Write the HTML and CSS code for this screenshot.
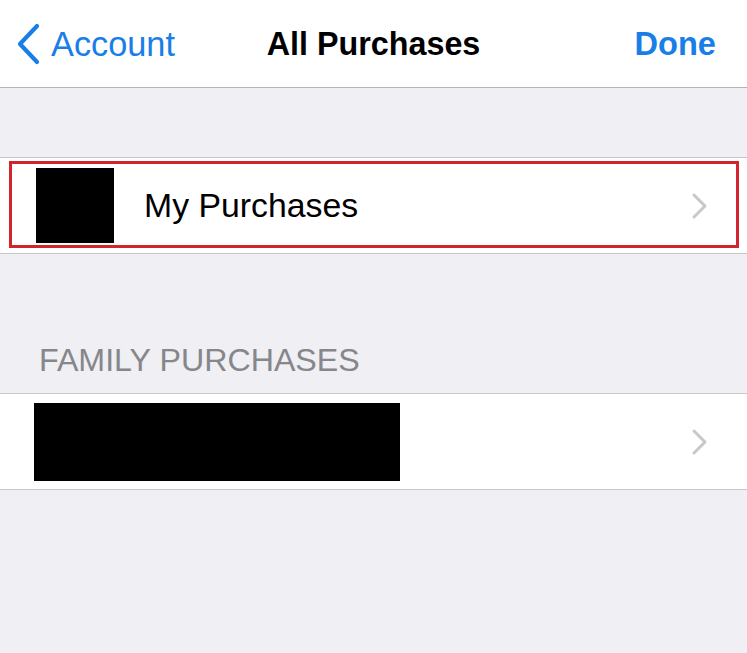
FILE: index.html
```html
<!DOCTYPE html>
<html lang="en">
<head>
<meta charset="utf-8">
<title>All Purchases</title>
<link rel="stylesheet" href="styles.css">
</head>
<body>
<header class="nav">
  <a class="nav-back">
    <svg class="back-chev" width="26" height="42" viewBox="0 0 26 42"><path d="M21 3 L4 21 L21 39" fill="none" stroke="#1a7ee8" stroke-width="4.2" stroke-linecap="round" stroke-linejoin="round"/></svg>
    <span class="back-label">Account</span>
  </a>
  <h1 class="nav-title">All Purchases</h1>
  <a class="nav-done">Done</a>
</header>

<section class="group first">
  <div class="row">
    <div class="thumb square"></div>
    <span class="row-label">My Purchases</span>
    <svg class="chev" width="18" height="28" viewBox="0 0 18 28"><path d="M3 3 L14 14 L3 25" fill="none" stroke="#c7c7cc" stroke-width="3" stroke-linecap="round" stroke-linejoin="round"/></svg>
    <div class="highlight"></div>
  </div>
</section>

<h2 class="section-header">FAMILY PURCHASES</h2>
<section class="group">
  <div class="row">
    <div class="thumb wide"></div>
    <svg class="chev" width="18" height="28" viewBox="0 0 18 28"><path d="M3 3 L14 14 L3 25" fill="none" stroke="#c7c7cc" stroke-width="3" stroke-linecap="round" stroke-linejoin="round"/></svg>
  </div>
</section>
</body>
</html>
```
FILE: styles.css
```css
html, body {
  margin: 0;
  padding: 0;
}
body {
  background: #efeff4;
  font-family: "Liberation Sans", Arial, sans-serif;
  width: 747px;
  height: 653px;
  overflow: hidden;
}
.nav {
  height: 87px;
  background: #ffffff;
  border-bottom: 1px solid #b4b4b8;
  display: grid;
  grid-template-columns: 1fr auto 1fr;
  align-items: center;
}
.nav-back {
  display: flex;
  align-items: center;
  padding-left: 16px;
  color: #1a7ee8;
  font-size: 34.3px;
}
.back-chev {
  display: block;
  margin-right: 9px;
}
.back-label {
  line-height: 40px;
}
.nav-title {
  margin: 0;
  font-size: 32.3px;
  font-weight: 700;
  color: #000;
  line-height: 40px;
}
.nav-done {
  text-align: right;
  padding-right: 31px;
  color: #1a7ee8;
  font-size: 32.6px;
  font-weight: 700;
  line-height: 40px;
}
.group {
  background: #ffffff;
  border-top: 1px solid #c8c7cc;
  border-bottom: 1px solid #c8c7cc;
}
.group.first {
  margin-top: 69px;
}
.row {
  position: relative;
  height: 95px;
  display: flex;
  align-items: center;
}
.thumb {
  background: #000;
}
.thumb.square {
  width: 78px;
  height: 75px;
  margin-left: 36px;
  margin-top: -1px;
}
.thumb.wide {
  width: 366px;
  height: 78px;
  margin-left: 34px;
}
.row-label {
  margin-left: 30px;
  font-size: 33.8px;
  color: #000;
}
.chev {
  display: block;
  margin-left: auto;
  margin-right: 38px;
}
.highlight {
  position: absolute;
  left: 9px;
  top: 3px;
  width: 724px;
  height: 81px;
  border: 3px solid #d3232c;
}
.section-header {
  margin: 0;
  padding: 89px 0 16px 39px;
  font-size: 32.2px;
  font-weight: 400;
  color: #86868b;
  line-height: 34px;
}
```
